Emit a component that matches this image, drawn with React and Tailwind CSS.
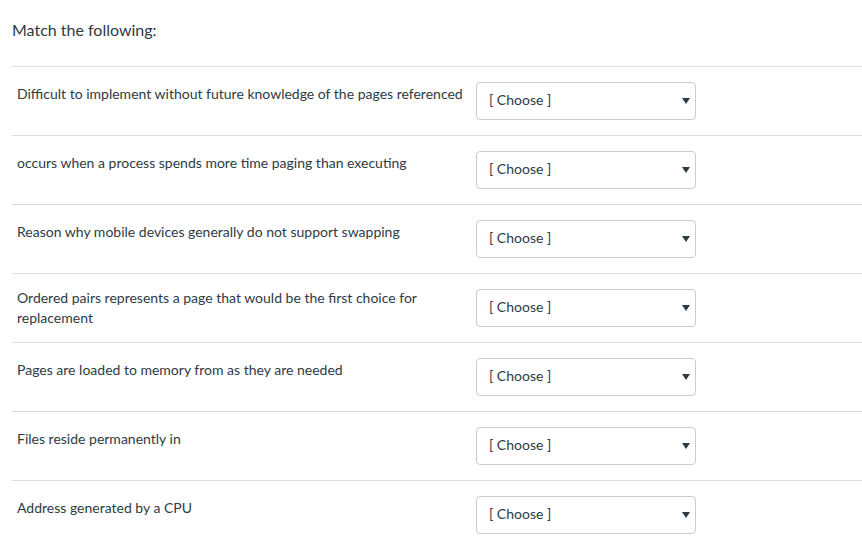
const rows = [
  "Difficult to implement without future knowledge of the pages referenced",
  "occurs when a process spends more time paging than executing",
  "Reason why mobile devices generally do not support swapping",
  "Ordered pairs represents a page that would be the first choice for replacement",
  "Pages are loaded to memory from as they are needed",
  "Files reside permanently in",
  "Address generated by a CPU",
];

const App = () => {
  return (
    <div className="w-[862px] h-[559px] overflow-hidden bg-white pl-3 text-[#2d3b45] font-['Lato','Liberation_Sans',sans-serif]">
      <h3 className="pt-[19px] pb-[25px] text-[16px] leading-[22px]">Match the following:</h3>

      <div>
        {rows.map((text, idx) => (
          <div key={idx} className="flex h-[69px] items-start border-t border-[#dcdcdc]">
            <div className="mt-[14px] flex min-h-[26px] w-[464px] items-center pl-[5px] pr-2 text-[14px] leading-[20px]">
              {text}
            </div>
            <div className="mt-[15px] flex h-[38px] w-[220px] items-center justify-between rounded-[4px] border border-[#c7cdd1] pl-[12px] pr-[5px] text-[14px]">
              <span className="mb-[2px] leading-[20px]">[ Choose ]</span>
              <svg width="8" height="6" viewBox="0 0 8 6">
                <path d="M0 0 L8 0 L4 6 Z" fill="#2d3b45" />
              </svg>
            </div>
          </div>
        ))}
      </div>
    </div>
  );
};

export default App;
